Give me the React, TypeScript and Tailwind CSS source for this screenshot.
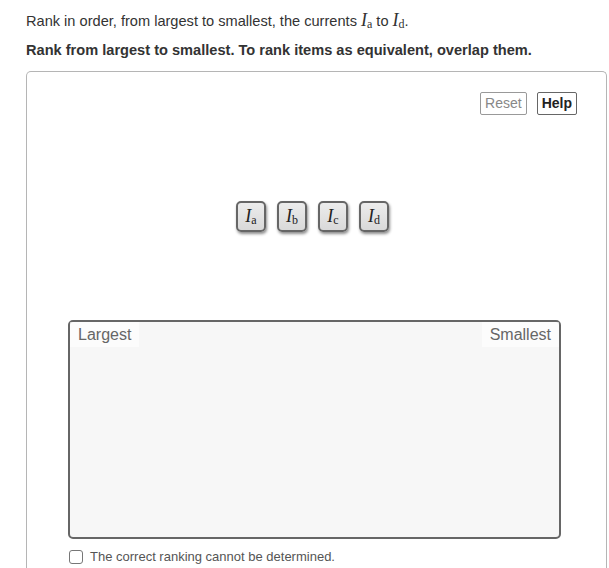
import React from "react";

const tiles = [
  { id: "a", sub: "a" },
  { id: "b", sub: "b" },
  { id: "c", sub: "c" },
  { id: "d", sub: "d" },
];

function Current({ sub, size = "text-[17px]" }: { sub: string; size?: string }) {
  return (
    <span className={`font-['Liberation_Serif',serif] ${size} leading-none`}>
      <i>I</i>
      <span className="text-[12px] align-[-2px]">{sub}</span>
    </span>
  );
}

export default function App() {
  return (
    <div className="w-[609px] h-[568px] overflow-hidden bg-white font-['Liberation_Sans',Arial,sans-serif] text-[#333]">
      <div className="pl-[26px] pt-[11px]">
        <p className="text-[14.6px] leading-[20px]">
          Rank in order, from largest to smallest, the currents <Current sub="a" size="text-[18px]" /> to{" "}
          <Current sub="d" size="text-[18px]" />.
        </p>
        <p className="mt-[10px] text-[14.6px] font-bold leading-[18px] text-[#333]">
          Rank from largest to smallest. To rank items as equivalent, overlap them.
        </p>

        <div className="mt-[12px] mr-[2px] h-[520px] rounded-tl-[5px] rounded-tr-[5px] border border-[#b5b5b5] border-b-0">
          <div className="flex justify-end gap-[10px] pt-[20px] pr-[29px]">
            <button className="h-[23px] rounded-[2px] border border-[#999] bg-white px-[4px] text-[14px] text-[#888]">
              Reset
            </button>
            <button className="h-[23px] rounded-[2px] border border-[#666] bg-white px-[4px] text-[14px] font-bold text-[#222]">
              Help
            </button>
          </div>

          <div className="mt-[86px] flex justify-center gap-[11px] pr-[8px]">
            {tiles.map((t) => (
              <div
                key={t.id}
                className="flex h-[31px] w-[30px] items-center justify-center rounded-[5px] border-2 border-[#666] bg-gradient-to-b from-[#ececec] to-[#d9d9d9] text-[#222] shadow-[1px_2px_3px_rgba(0,0,0,0.45)]"
              >
                <Current sub={t.sub} size="text-[18px]" />
              </div>
            ))}
          </div>

          <div className="ml-[41px] mt-[88px] flex h-[219px] w-[493px] justify-between rounded-[5px] border-2 border-[#666] bg-[#f7f7f7]">
            <span className="h-fit bg-white/60 px-[8px] pt-[1px] text-[16px] text-[#666]">Largest</span>
            <span className="h-fit bg-white/60 px-[8px] pt-[1px] text-[16px] text-[#666]">Smallest</span>
          </div>

          <label className="ml-[42px] mt-[8px] flex items-center gap-[7px] text-[13px] text-[#555]">
            <span className="h-[14px] w-[14px] rounded-[3px] border border-[#777] bg-white" />
            The correct ranking cannot be determined.
          </label>
        </div>
      </div>
    </div>
  );
}
